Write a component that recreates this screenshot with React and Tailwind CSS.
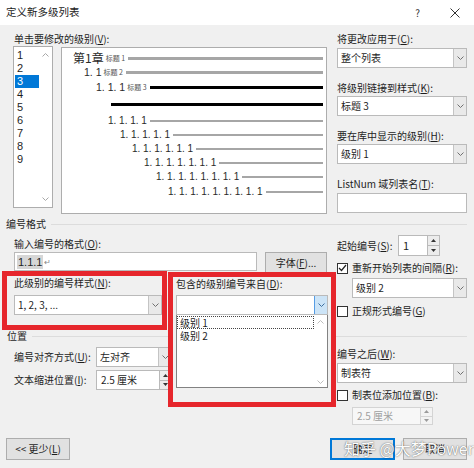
import React from "react";

const Chev = ({ up = false, color = "#606060" }) => (
  <svg width="7" height="4" viewBox="0 0 7 4">
    <path
      d={up ? "M0.5 3.5L3.5 0.5L6.5 3.5" : "M0.5 0.5L3.5 3.5L6.5 0.5"}
      stroke={color}
      fill="none"
      strokeWidth="1"
    />
  </svg>
);

const Tri = ({ up = false, color = "#333" }) => (
  <svg width="5" height="3" viewBox="0 0 5 3">
    <path d={up ? "M0 3L2.5 0L5 3Z" : "M0 0L2.5 3L5 0Z"} fill={color} />
  </svg>
);

const Combo = ({ text, className = "", active = false }) => (
  <div className={"flex h-[20px] bg-white border border-[#bababa] " + className}>
    <div className="flex-1 flex items-center pl-[3px] whitespace-nowrap overflow-hidden">{text}</div>
    <div
      className={
        "w-[13px] flex items-center justify-center border-l " +
        (active ? "bg-[#cce4f7] border-[#569de5]" : "bg-[#e9e9e9] border-[#c4c4c4]")
      }
    >
      <Chev color={active ? "#3c6fa0" : "#707070"} />
    </div>
  </div>
);

const Spin = ({ text, className = "", disabled = false }) => (
  <div
    className={
      "flex border " +
      (disabled ? "bg-[#f7f7f7] border-[#d4d4d4] text-[#a0a0a0] " : "bg-white border-[#bababa] ") +
      className
    }
  >
    <div className="flex-1 flex items-center pl-[4px] whitespace-nowrap">{text}</div>
    <div className={"w-[12px] flex flex-col border-l " + (disabled ? "border-[#d4d4d4]" : "border-[#bababa]")}>
      <div
        className={
          "flex-1 flex items-center justify-center border-b " +
          (disabled ? "bg-[#f3f3f3] border-[#d4d4d4]" : "bg-[#ececec] border-[#bababa]")
        }
      >
        <Tri up color={disabled ? "#9a9a9a" : "#333"} />
      </div>
      <div className={"flex-1 flex items-center justify-center " + (disabled ? "bg-[#f3f3f3]" : "bg-[#ececec]")}>
        <Tri color={disabled ? "#9a9a9a" : "#333"} />
      </div>
    </div>
  </div>
);

const Check = ({ checked = false }) => (
  <div className="w-[11px] h-[11px] border border-[#333] bg-white flex items-center justify-center shrink-0">
    {checked && (
      <svg width="9" height="8" viewBox="0 0 9 8">
        <path d="M1 4L3.5 6.5L8 1" stroke="#222" strokeWidth="1.2" fill="none" />
      </svg>
    )}
  </div>
);

const Btn = ({ children, className = "" }) => (
  <div
    className={
      "h-[22px] flex items-center justify-center bg-[#e1e1e1] border border-[#adadad] " + className
    }
  >
    {children}
  </div>
);

const rows = [
  { pl: 11, h: 14, num: "第1章", numCls: "text-[12px]", tag: "标题 1", line: "h-[3px] bg-[#a6a6a6]" },
  { pl: 22, h: 14, num: "1. 1", numCls: "text-[10.5px]", tag: "标题 2", line: "h-[3px] bg-[#a6a6a6]" },
  { pl: 34, h: 16, num: "1. 1. 1", numCls: "text-[10.5px]", tag: "标题 3", line: "h-[3px] bg-black" },
  { pl: 49, h: 18, num: null, line: "h-[3px] bg-black" },
  { pl: 46, h: 15, num: "1. 1. 1. 1", line: "h-[2px] bg-[#a6a6a6]" },
  { pl: 58, h: 13, num: "1. 1. 1. 1. 1", line: "h-[2px] bg-[#a6a6a6]" },
  { pl: 70, h: 15, num: "1. 1. 1. 1. 1. 1", line: "h-[2px] bg-[#a6a6a6]" },
  { pl: 82, h: 14, num: "1. 1. 1. 1. 1. 1. 1", line: "h-[2px] bg-[#a6a6a6]" },
  { pl: 94, h: 14, num: "1. 1. 1. 1. 1. 1. 1. 1", line: "h-[2px] bg-[#a6a6a6]" },
  { pl: 106, h: 15, num: "1. 1. 1. 1. 1. 1. 1. 1. 1", line: "h-[2px] bg-[#a6a6a6]" },
];

const heights = ["h-[14px]", "h-[14px]", "h-[16px]", "h-[18px]", "h-[15px]", "h-[13px]", "h-[15px]", "h-[14px]", "h-[14px]", "h-[15px]"];
const pads = ["pl-[11px]", "pl-[22px]", "pl-[34px]", "pl-[49px]", "pl-[46px]", "pl-[58px]", "pl-[70px]", "pl-[82px]", "pl-[94px]", "pl-[106px]"];

function Preview() {
  return (
    <div className="ml-[8px] mt-[1px] w-[266px] h-[167px] bg-white border border-[#adadad] pt-[3px] pr-[3px] flex flex-col">
      {rows.map((r, i) => (
        <div key={i} className={"flex items-center " + heights[i] + " " + pads[i]}>
          {r.num && (
            <span
              className={
                "whitespace-nowrap text-[#2a2a2a] " +
                (i === 0 ? "font-['Noto_Sans_CJK_SC',sans-serif] " : "font-['Liberation_Sans',sans-serif] ") +
                (r.numCls || "text-[10px]")
              }
            >
              {r.num}
            </span>
          )}
          {r.tag && <span className="ml-[2px] text-[7px] text-[#555] whitespace-nowrap">{r.tag}</span>}
          <div className={"flex-1 " + (r.num ? "ml-[3px] " : "") + r.line} />
        </div>
      ))}
    </div>
  );
}

function LevelList() {
  const items = ["1", "2", "3", "4", "5", "6", "7", "8", "9"];
  return (
    <div className="w-[40px] h-[162px] bg-white border border-[#adadad] flex">
      <div className="w-[25px] pt-[2px] pl-[1px]">
        {items.map((it) => (
          <div
            key={it}
            className={
              "h-[13px] flex items-center pl-[2px] text-[11px] font-['Liberation_Sans',sans-serif] " +
              (it === "3" ? "bg-[#0078d7] text-white" : "text-[#1e1e1e]")
            }
          >
            {it}
          </div>
        ))}
      </div>
      <div className="flex-1 flex flex-col items-center justify-between pt-[6px] pb-[6px]">
        <Chev up color="#a8a8a8" />
        <Chev color="#a8a8a8" />
      </div>
    </div>
  );
}

export default function App() {
  return (
    <div className="relative w-[474px] h-[468px] overflow-hidden bg-[#f0f0f0] text-[10px] leading-none text-[#1e1e1e] font-['Noto_Sans_CJK_SC',sans-serif]">
      {/* title bar */}
      <div className="h-[25px] bg-white flex items-center pl-[6px]">
        <span className="text-[10.5px] text-[#222]">定义新多级列表</span>
        <span className="ml-auto text-[10px] text-[#333]">?</span>
        <span className="ml-[30px] mr-[14px]">
          <svg width="10" height="10" viewBox="0 0 10 10">
            <path d="M0.5 0.5L9.5 9.5M9.5 0.5L0.5 9.5" stroke="#333" strokeWidth="1" />
          </svg>
        </span>
      </div>

      {/* top section */}
      <div className="flex mt-[6px]">
        <div className="ml-[13px] w-[314px]">
          <div className="h-[15px] flex items-center pl-[1px]">
            单击要修改的级别(<u>V</u>):
          </div>
          <div className="flex">
            <LevelList />
            <Preview />
          </div>
        </div>
        <div className="ml-[10px] w-[130px] flex flex-col">
          <div className="h-[15px] flex items-center">将更改应用于(<u>C</u>):</div>
          <Combo text="整个列表" className="mt-[2px]" />
          <div className="h-[15px] mt-[12px] flex items-center">将级别链接到样式(<u>K</u>):</div>
          <Combo text="标题 3" className="mt-[1px]" />
          <div className="h-[15px] mt-[12px] flex items-center">要在库中显示的级别(<u>H</u>):</div>
          <Combo text="级别 1" className="mt-[1px]" />
          <div className="h-[15px] mt-[12px] flex items-center">ListNum 域列表名(<u>T</u>):</div>
          <div className="mt-[2px] h-[20px] bg-white border border-[#bababa]" />
        </div>
      </div>

      {/* 编号格式 header */}
      <div className="mt-[3px] h-[14px] flex items-center pl-[6px]">
        <span>编号格式</span>
        <div className="flex-1 ml-[5px] mr-[7px] h-px bg-[#dcdcdc]" />
      </div>

      {/* format section */}
      <div className="flex">
        <div className="relative w-[335px]">
          <div className="ml-[14px] mt-[5px] h-[15px] flex items-center">输入编号的格式(<u>O</u>):</div>
          <div className="ml-[14px] mt-[1px] h-[19px] flex items-start">
            <div className="w-[243px] h-[19px] bg-white border border-[#bababa] flex items-center pl-[2px]">
              <span className="bg-[#d6d6d6] px-[1px] text-[11px] font-['Liberation_Sans',sans-serif] leading-[14px]">1.1.1</span>
              <span className="text-[8px] text-[#888] ml-[1px]">↵</span>
            </div>
            <Btn className="ml-[8px] w-[62px] !h-[21px]">
              字体(<u>F</u>)...
            </Btn>
          </div>
          {/* red box 1 */}
          <div className="ml-[2px] w-[165px] h-[59px] border-[5px] border-[#e6262c]">
            <div className="h-[14px] pl-[7px] flex items-center">此级别的编号样式(<u>N</u>):</div>
            <Combo text="1, 2, 3, ..." className="ml-[7px] mt-[5px] w-[148px]" />
          </div>
          {/* red box 2 with open dropdown */}
          <div className="absolute z-10 left-[168px] top-[41px] w-[168px] h-[135px] border-[5px] border-[#e6262c] bg-[#f0f0f0]">
            <div className="h-[13px] pl-[3px] flex items-center">包含的级别编号来自(<u>D</u>):</div>
            <Combo text="" active className="ml-[3px] mt-[5px] w-[152px]" />
            <div className="ml-[3px] w-[152px] h-[73px] bg-white border border-[#828282] border-t-0 flex">
              <div className="flex-1 pt-[1px]">
                <div className="h-[13px] flex items-center pl-[2px] border border-dotted border-[#444]">级别 1</div>
                <div className="h-[13px] flex items-center pl-[3px]">级别 2</div>
              </div>
              <div className="w-[13px] flex flex-col items-center justify-between pt-[5px] pb-[3px]">
                <Chev up color="#bdbdbd" />
                <Chev color="#bdbdbd" />
              </div>
            </div>
          </div>
        </div>
        <div className="ml-[2px] w-[130px] flex flex-col">
          <div className="mt-[4px] h-[21px] flex items-center">
            <span className="w-[61px]">起始编号(<u>S</u>):</span>
            <Spin text="1" className="w-[42px] h-[21px] text-[11px]" />
          </div>
          <div className="mt-[5px] h-[14px] flex items-center">
            <Check checked />
            <span className="ml-[4px]">重新开始列表的间隔(<u>R</u>):</span>
          </div>
          <Combo text="级别 2" className="ml-[15px] mt-[3px] w-[115px]" />
          <div className="mt-[6px] h-[14px] flex items-center">
            <Check />
            <span className="ml-[4px]">正规形式编号(<u>G</u>)</span>
          </div>
        </div>
      </div>

      {/* 位置 header */}
      <div className="h-[12px] flex items-center pl-[7px]">
        <span>位置</span>
        <div className="flex-1 ml-[5px] mr-[7px] h-px bg-[#dcdcdc]" />
      </div>

      {/* position section */}
      <div className="flex">
        <div className="w-[335px]">
          <div className="ml-[14px] mt-[5px] h-[20px] flex items-center">
            <span className="w-[82px]">编号对齐方式(<u>U</u>):</span>
            <Combo text="左对齐" className="w-[76px]" />
          </div>
          <div className="ml-[14px] mt-[3px] h-[20px] flex items-center">
            <span className="w-[82px]">文本缩进位置(<u>I</u>):</span>
            <Spin text="2.5 厘米" className="w-[76px] h-[20px]" />
          </div>
        </div>
        <div className="ml-[2px] w-[130px] flex flex-col">
          <div className="mt-[5px] h-[14px] flex items-center">编号之后(<u>W</u>):</div>
          <Combo text="制表符" className="mt-[2px]" />
          <div className="mt-[5px] h-[14px] flex items-center">
            <Check />
            <span className="ml-[4px]">制表位添加位置(<u>B</u>):</span>
          </div>
          <Spin text="2.5 厘米" disabled className="ml-[15px] mt-[5px] w-[81px] h-[18px]" />
        </div>
      </div>

      {/* buttons */}
      <div className="mt-[13px] flex items-center">
        <Btn className="ml-[6px] w-[64px]">
          &lt;&lt; 更少(<u>L</u>)
        </Btn>
        <Btn className="ml-auto w-[65px] !border-2 !border-[#0078d7]">确定</Btn>
        <Btn className="ml-[8px] mr-[7px] w-[64px]">取消</Btn>
      </div>

      {/* watermark */}
      <div className="absolute left-[344px] top-[439px] text-[16px] leading-[18px] text-white whitespace-nowrap [text-shadow:0_0_1px_rgba(0,0,0,0.55),0_0_2px_rgba(0,0,0,0.35)] opacity-90">
        知乎 @大梦Power
      </div>
    </div>
  );
}
